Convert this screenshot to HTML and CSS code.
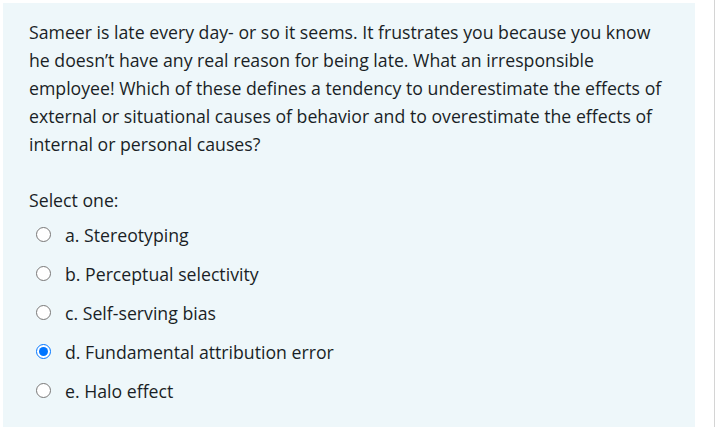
FILE: index.html
```html
<!DOCTYPE html>
<html lang="en">
<head>
<meta charset="utf-8">
<title>Question</title>
<link rel="stylesheet" href="styles.css">
</head>
<body>
<div class="page">
  <div class="formulation">
    <p class="qtext">Sameer is late every day- or so it seems. It frustrates you because you know<br>he doesn’t have any real reason for being late. What an irresponsible<br>employee! Which of these defines a tendency to underestimate the effects of<br>external or situational causes of behavior and to overestimate the effects of<br>internal or personal causes?</p>
    <div class="prompt">Select one:</div>
    <div class="answers">
      <label class="option"><input type="radio" name="q"><span>a. Stereotyping</span></label>
      <label class="option"><input type="radio" name="q"><span>b. Perceptual selectivity</span></label>
      <label class="option"><input type="radio" name="q"><span>c. Self-serving bias</span></label>
      <label class="option"><input type="radio" name="q" checked><span>d. Fundamental attribution error</span></label>
      <label class="option"><input type="radio" name="q"><span>e. Halo effect</span></label>
    </div>
  </div>
</div>
</body>
</html>
```

FILE: styles.css
```css
html, body {
  margin: 0;
  padding: 0;
  background: #ffffff;
  height: 100%;
  overflow: hidden;
}
.page {
  width: 715px;
  height: 100%;
  border-right: 1px solid #d4d4d4;
  padding-top: 3px;
  padding-left: 3px;
  box-sizing: border-box;
}
.formulation {
  width: 692px;
  height: 100%;
  box-sizing: border-box;
  background: #eef7fa;
  color: #1a1f26;
  font-family: "Open Sans", "Noto Sans", sans-serif;
  font-size: 17.7px;
  line-height: 28px;
  padding: 15px 20px 0 26px;
}
.qtext {
  margin: 0 0 28px 0;
  white-space: nowrap;
}
.prompt {
  margin: 0;
}
.answers {
  display: flex;
  flex-direction: column;
  margin-top: 1px;
}
.option {
  display: flex;
  align-items: center;
  padding: 6px 0 5px 7px;
  gap: 14px;
}
.option input {
  width: 15px;
  height: 15px;
  margin: 0;
  position: relative;
  top: -1px;
  accent-color: #0075ff;
}
```
